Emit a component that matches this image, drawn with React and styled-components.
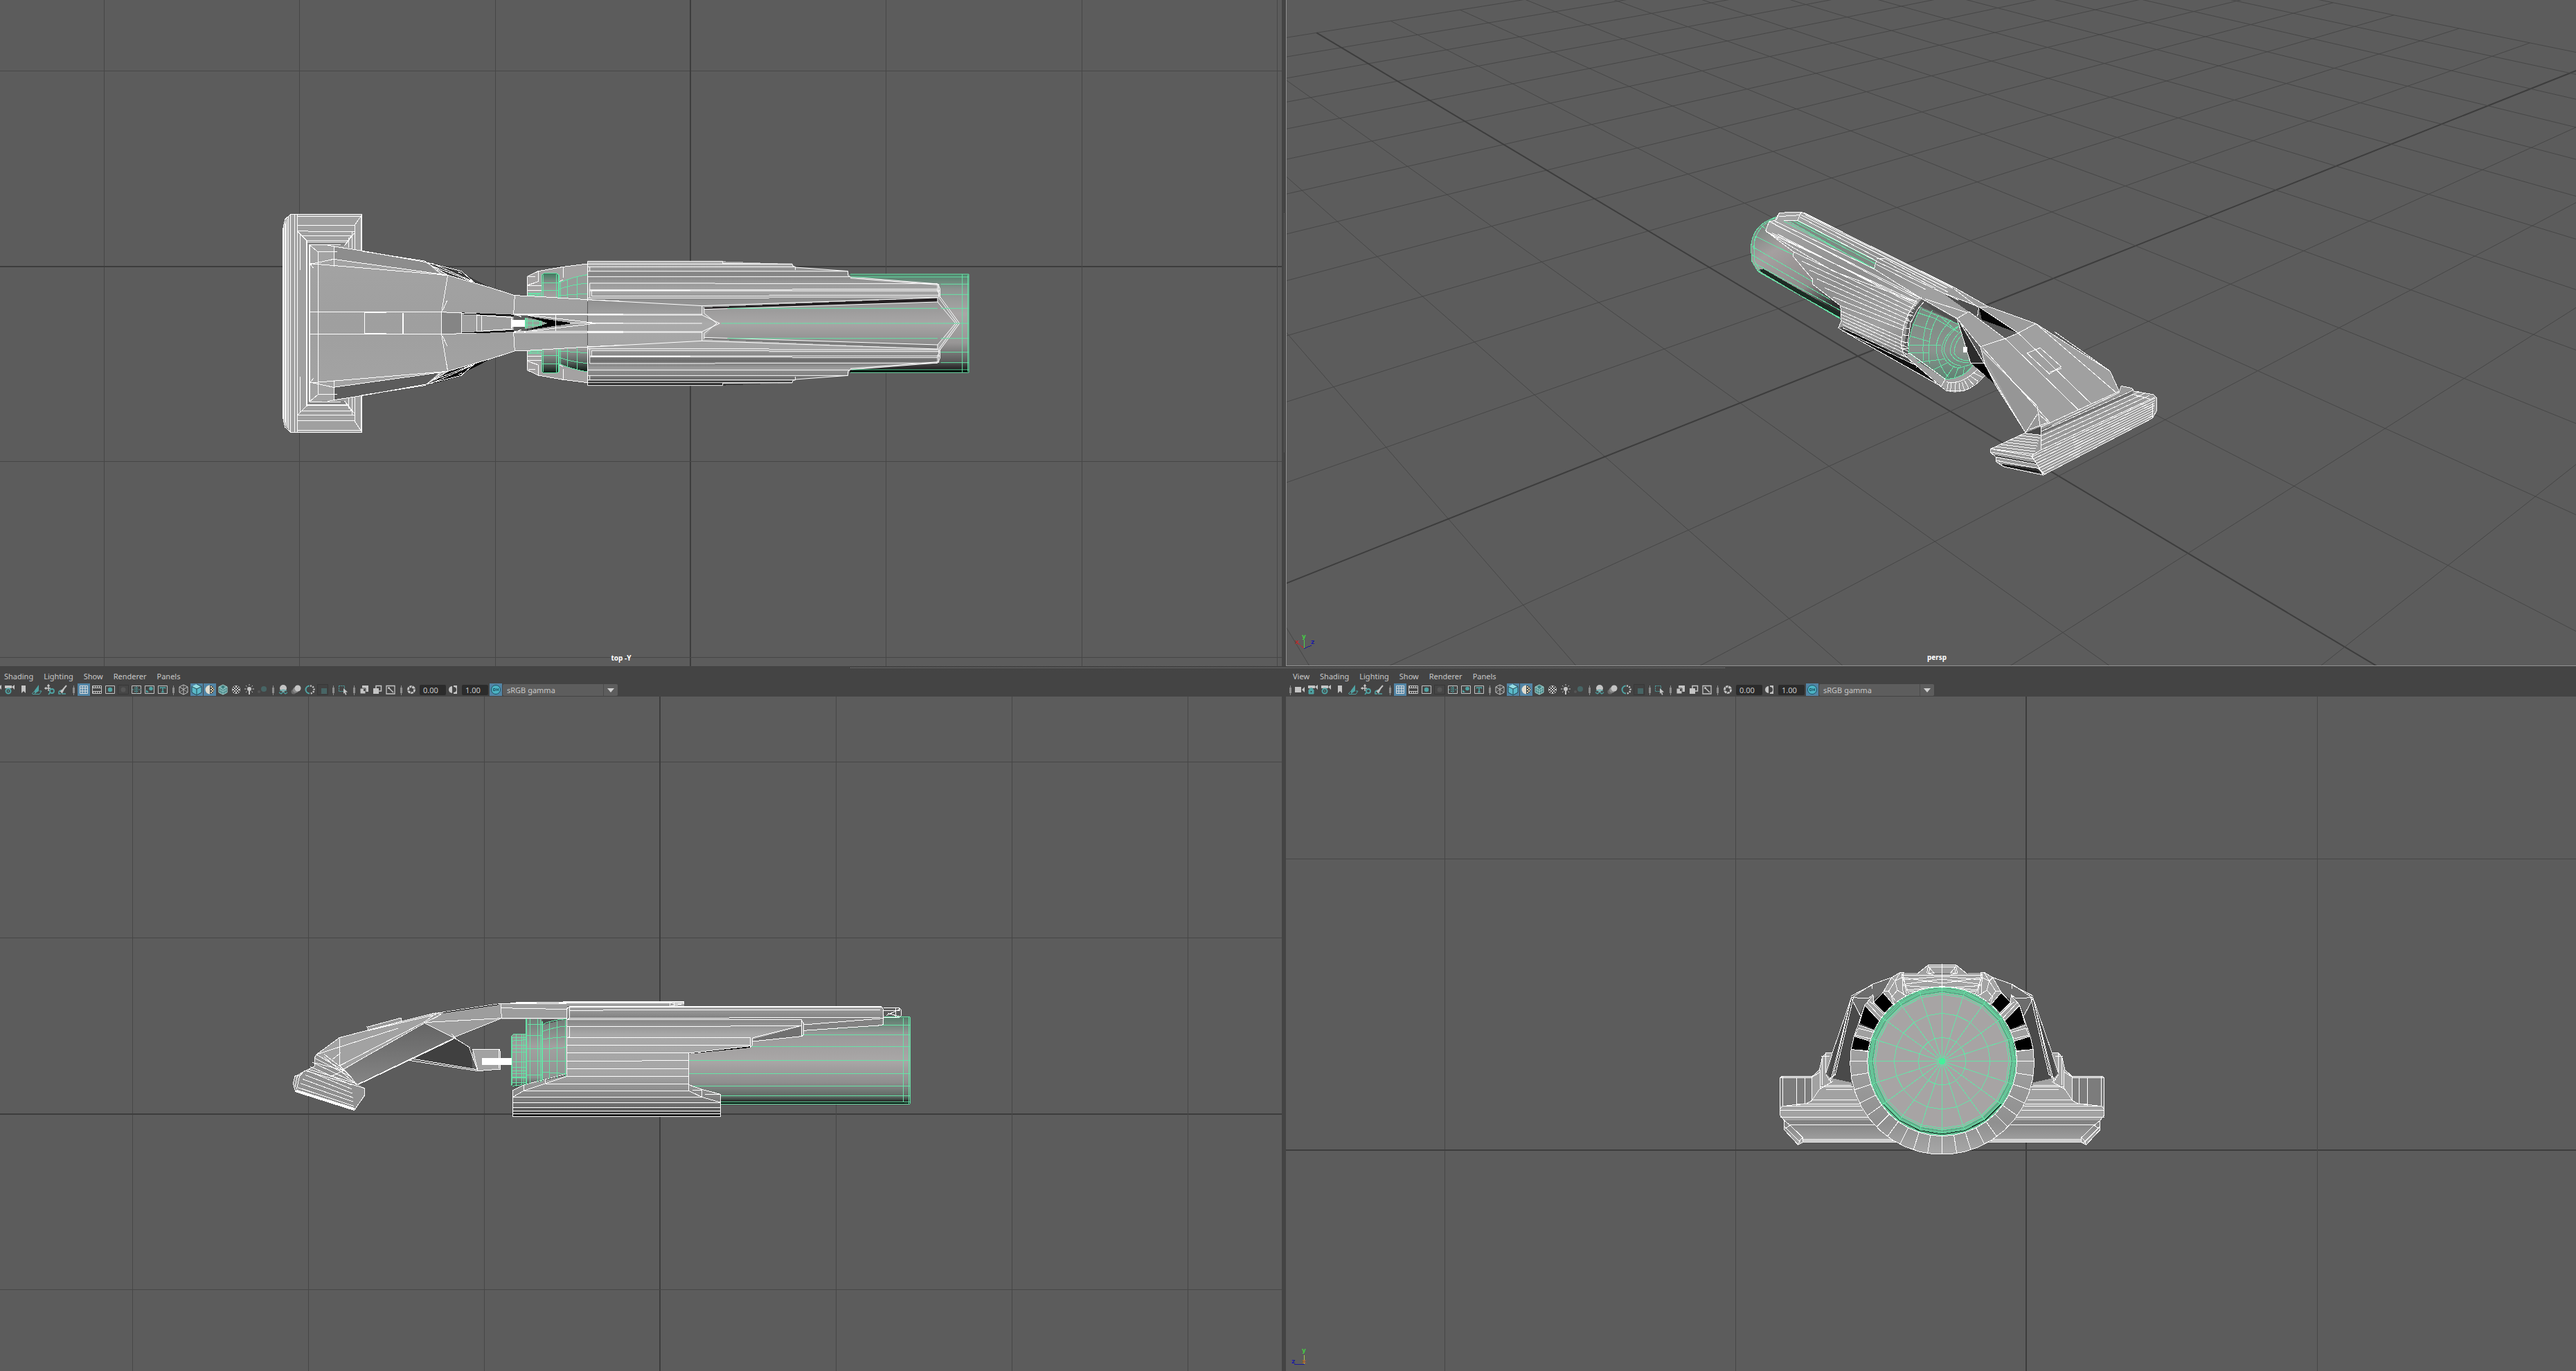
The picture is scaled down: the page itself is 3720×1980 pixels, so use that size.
import React from "react";
import styled, { createGlobalStyle, css } from "styled-components";

const GlobalStyle = createGlobalStyle`
  *, *::before, *::after { box-sizing: border-box; }
  html, body { margin: 0; background: #444; }
  body { font-family: "Noto Sans", "Open Sans", sans-serif; font-size: 11px; color: #c8c8c8; }
  button, input, select { font: inherit; color: inherit; }
`;

/* ---------- layout ---------- */

const Workspace = styled.main`
  display: flex;
  flex-direction: column;
  height: 100vh;
  background: #444;
`;

const PaneRow = styled.div`
  display: flex;
  flex: ${(p) => p.$share} 1 0;
  min-height: 0;
`;

const Pane = styled.section`
  display: flex;
  flex-direction: column;
  flex: ${(p) => p.$share} 1 0;
  min-width: 0;
  overflow: hidden;
`;

const Splitter = styled.div`
  display: flex;
  flex: none;
  align-items: center;
  justify-content: center;
  background: #444;
  ${(p) => (p.$vertical ? css`width: 6px;` : css`height: 4px;`)}
`;

const Grip = styled.span`
  ${(p) =>
    p.$vertical
      ? css`
          width: 1px;
          height: 36%;
          background: repeating-linear-gradient(180deg, #6a6a6a 0 1px, transparent 1px 2px);
        `
      : css`
          width: 34%;
          height: 1px;
          background: repeating-linear-gradient(90deg, #868686 0 1px, transparent 1px 2px);
        `}
`;

const Stage = styled.div`
  position: relative;
  flex: 1;
  min-height: 0;
  background: #5c5c5c;
  ${(p) => p.$active && css`border-left: 1px solid #929292; border-bottom: 1px solid #929292;`}
`;

const Scene = styled.svg`
  position: absolute;
  inset: 0;
  width: 100%;
  height: 100%;
  shape-rendering: crispEdges;

  path, line, polygon, circle { vector-effect: non-scaling-stroke; }
`;

const CameraName = styled.span`
  position: absolute;
  bottom: 4px;
  left: ${(p) => p.$left};
  color: #fff;
  font-size: 10px;
  font-weight: 700;
  line-height: 16px;
`;

const AxisText = styled.text`
  font: 700 9px "DejaVu Sans", sans-serif;
`;

/* ---------- panel header ---------- */

const Header = styled.header`
  flex: none;
  height: 40px;
  background: #444;
`;

const MenuBar = styled.nav`
  display: flex;
  gap: 15px;
  height: 21px;
  padding-left: ${(p) => (p.$cropped ? "6px" : "10px")};
  align-items: center;
`;

const MenuItem = styled.button`
  padding: 0;
  border: 0;
  background: none;
  color: #c8c8c8;
  line-height: 16px;
`;

const Toolbar = styled.div`
  display: flex;
  height: 19px;
  margin-left: ${(p) => (p.$cropped ? "-43px" : "1px")};
  align-items: center;
`;

const Divider = styled.span`
  display: flex;
  width: 11px;
  height: 14px;
  justify-content: center;
  background:
    linear-gradient(#8c8c8c, #8c8c8c) center / 3px 8px no-repeat,
    linear-gradient(#8c8c8c, #8c8c8c) center / 1px 14px no-repeat;
`;

const Tool = styled.button`
  display: flex;
  flex: none;
  width: 19px;
  height: 19px;
  padding: 0;
  border: 0;
  border-right: 1px solid #444;
  border-bottom: 1px solid #444;
  align-items: center;
  justify-content: center;
  background: ${(p) => (p.$on ? "#5285a6" : "transparent")};
  opacity: ${(p) => (p.$dim ? 0.35 : 1)};
`;

const Field = styled.input`
  width: 38px;
  height: 15px;
  margin: 0 2px;
  padding: 0 5px;
  border: 0;
  border-radius: 2px;
  background: #2b2b2b;
  color: #c8c8c8;
`;

const SelectWrap = styled.div`
  position: relative;
  width: 166px;
  height: 17px;
`;

const Select = styled.select`
  width: 100%;
  height: 17px;
  padding: 0 24px 0 6px;
  border: 0;
  border-radius: 2px;
  appearance: none;
  background: linear-gradient(90deg, #5d5d5d 145px, #4b4b4b 145px 146px, #5d5d5d 146px);
  color: #c8c8c8;
  line-height: 16px;
`;

const Caret = styled.svg`
  position: absolute;
  top: 6px;
  right: 5px;
  pointer-events: none;
`;

/* ---------- toolbar icons, drawn on an 18 x 18 field ---------- */

const L = "#c4c4c4";
const T = "#4fa3a3";

const CubeLines = ({ c }) => (
  <path d="M9 2L15 5V13L9 16L3 13V5ZM3 5L9 8.500L15 5M9 8.500V16" fill="none" stroke={c} />
);

const glyphs = {
  camera: <path d="M1 5h9v8H1zM11 9l4-4v8z" fill={L} />,
  cameraLock: (
    <>
      <path d="M1 3h10v4H1zM11 5l4-3v7z" fill={L} />
      <path d="M2 9h7v6H2zM3.500 9V7.500q2-2 4 0V9" fill={T} stroke={T} />
      <circle cx="5.500" cy="12" r="1" fill="#333" />
    </>
  ),
  cameraGear: (
    <>
      <path d="M1 3h10v4H1zM11 5l4-3v7z" fill={L} />
      <circle cx="6" cy="11" r="3.500" fill="#444" stroke={T} strokeWidth="2" />
      <circle cx="6" cy="11" r="1" fill={T} />
    </>
  ),
  bookmark: <path d="M6 3h6v11l-3-3l-3 3z" fill={L} />,
  plane: (
    <>
      <path d="M6 10L12 2V11L6 15z" fill={T} />
      <path d="M2 15L6 11M3 15.500h10L16 11h-3" fill="none" stroke={T} />
    </>
  ),
  pan: (
    <>
      <path d="M7 2v9M2 7h8M5.500 4L7 2l1.500 2M4 5.500L2 7l2 1.500" fill="none" stroke={L} strokeWidth="1.500" />
      <circle cx="12" cy="11" r="3" fill="none" stroke={T} strokeWidth="1.800" />
      <path d="M9.500 13L7 16" stroke={T} strokeWidth="1.800" />
    </>
  ),
  brush: (
    <>
      <path d="M14 3L8 10M9.500 9l-2 4l-2-2z" stroke={L} strokeWidth="2" fill={L} />
      <path d="M6 10q-4 1-3 5h3M7 15h6" fill="none" stroke={T} strokeWidth="1.500" />
    </>
  ),
  grid: <path d="M3.500 3.500h11v11h-11zM7 3v12M11 3v12M3 7h12M3 11h12" fill="none" stroke="#dcdcdc" />,
  film: (
    <>
      <path d="M2.500 3.500h13v11h-13zM2 6.500h14M2 11.500h14" fill="none" stroke={L} />
      <path d="M3 5h12M3 13h12" stroke={L} strokeWidth="2" strokeDasharray="1 2" />
    </>
  ),
  gate: (
    <>
      <path d="M2.500 3.500h13v11h-13z" fill="none" stroke={L} />
      <circle cx="9" cy="9" r="3.200" fill={T} />
    </>
  ),
  gateMask: (
    <>
      <path d="M1.500 2.500h15v13h-15z" fill="#4a4a4a" stroke="#222" />
      <circle cx="9" cy="9" r="3.500" fill="#777" />
    </>
  ),
  chart: (
    <>
      <path d="M2.500 3.500h13v11h-13z" fill="none" stroke={L} />
      <path d="M9 4v11M3 9h13M6 6.500h6M6 11.500h6" stroke={T} strokeDasharray="2 1" />
    </>
  ),
  action: (
    <>
      <path d="M2.500 3.500h13v11h-13z" fill="none" stroke={L} />
      <circle cx="11" cy="7.500" r="2.800" fill={T} />
      <path d="M4 13v-4l4 4z" fill={T} />
    </>
  ),
  title: (
    <>
      <path d="M2.500 3.500h13v11h-13z" fill="none" stroke={L} />
      <path d="M5.500 7.500v-1.500h7v1.500M9 6v6.500M7 12.500h4" fill="none" stroke={T} strokeWidth="1.600" />
    </>
  ),
  wireCube: (
    <>
      <CubeLines c={L} />
      <path d="M9 2v7M3 13l6-4.500l6 4.500" fill="none" stroke={L} strokeWidth="0.700" />
    </>
  ),
  solidCube: (
    <>
      <path d="M9 1L16 4.500V13L9 17L2 13V4.500z" fill="#5ab9c9" />
      <path d="M9 1L16 4.500L9 8L2 4.500z" fill="#93dbe2" />
      <path d="M9 1L16 4.500V13L9 17L2 13V4.500L9 8L16 4.500M9 8V17" fill="none" stroke="#24444e" />
    </>
  ),
  halfSphere: (
    <>
      <circle cx="9" cy="9" r="6.500" fill="#e0dccf" />
      <path d="M9 2.500a6.500 6.500 0 0 1 0 13z" fill="#39464e" />
      <path d="M10 4h2v2h-2zM12 6h2v2h-2zM10 8h2v2h-2zM12 10h2v2h-2zM10 12h2v2h-2zM14 8h1v2h-1z" fill="#e0c9a0" />
    </>
  ),
  shadedCube: (
    <>
      <path d="M9 2L15 5V13L9 16L3 13V5z" fill="#3d7f80" />
      <CubeLines c="#a7d5d2" />
      <path d="M6 4v10M12 4v10M4 9l5 3l5-3" fill="none" stroke="#a7d5d2" strokeWidth="0.800" />
    </>
  ),
  checker: (
    <>
      <circle cx="9" cy="9" r="6" fill={L} />
      <path d="M6 4h2v2H6zM10 4h2v2h-2zM4 6h2v2H4zM8 6h2v2H8zM12 6h2v2h-2zM6 8h2v2H6zM10 8h2v2h-2zM4 10h2v2H4zM8 10h2v2H8zM12 10h2v2h-2zM6 12h2v2H6zM10 12h2v2h-2z" fill="#3b3b3b" />
    </>
  ),
  bulb: (
    <>
      <circle cx="9" cy="8" r="3" fill={L} />
      <path d="M8 10h2v6H8z" fill={L} />
      <path d="M9 1v2M2 8h2.500M13.500 8H16M4 3l1.500 1.500M14 3l-1.500 1.500M4 13l1.500-1.500M14 13l-1.500-1.500" stroke={L} />
    </>
  ),
  spheres: (
    <>
      <circle cx="11" cy="8" r="4" fill={T} />
      <circle cx="4" cy="12" r="2" fill="#777" />
    </>
  ),
  jelly: (
    <>
      <circle cx="9" cy="7" r="5" fill={L} />
      <path d="M4 11q5-3 10 0M3 13l3 2l3-3l3 3l3-2" fill="none" stroke={T} strokeWidth="1.300" />
    </>
  ),
  blur: (
    <>
      <circle cx="5" cy="12" r="3.500" fill="#6a6a6a" />
      <circle cx="8" cy="9.500" r="4" fill="#8a8a8a" />
      <circle cx="11" cy="7" r="4.500" fill={L} />
    </>
  ),
  antialias: (
    <>
      <path d="M9 3.500a5.500 5.500 0 0 0 0 11" fill="none" stroke={T} strokeWidth="2" />
      <path d="M10 3.500a5.500 5.500 0 0 1 0 11" fill="none" stroke={L} strokeWidth="2.500" strokeDasharray="2 1.500" />
    </>
  ),
  depth: (
    <>
      <path d="M1.500 1.500h15v15h-15z" fill="#3e3e3e" stroke="#222" />
      <path d="M7 7h8v8H7z" fill={T} />
    </>
  ),
  isolate: (
    <>
      <path d="M2.500 3.500h8v8h-8z" fill="none" stroke={T} strokeDasharray="2 1" />
      <path d="M9 7l6 5.500l-3 .200l1.500 3.300l-1.500 .700l-1.500-3.500L9 15z" fill={L} />
    </>
  ),
  xray: (
    <>
      <path d="M6 3h9v9H6z" fill={L} />
      <path d="M3 7h8v8H3z" fill={L} stroke="#444" />
      <path d="M8 8h2.500v3H8z" fill="#444" />
    </>
  ),
  xrayActive: (
    <>
      <path d="M7 3.500h7.500V11H7z" fill="none" stroke={L} strokeWidth="1.500" />
      <path d="M3 7h8v8H3z" fill={L} />
    </>
  ),
  joints: (
    <>
      <path d="M3 3.500h12v11.500H3z" fill="none" stroke={L} strokeWidth="1.300" />
      <path d="M6 6l7 7" stroke={L} strokeWidth="1.500" />
      <circle cx="6.500" cy="6.500" r="1.500" fill={L} />
    </>
  ),
  aperture: (
    <>
      <circle cx="9" cy="9" r="6" fill={L} />
      <path d="M9 6.500l2.500 1.500v3L9 12l-2.500-1.500v-3zM9 6.500L11 2M11.500 8H16M11 11l2.500 4M8.500 12L6.500 16M6.500 10H2M7 7L4.500 3" fill="#444" stroke="#444" />
    </>
  ),
  gamma: (
    <>
      <path d="M7 4a5 5 0 0 0 0 10z" fill={L} />
      <path d="M9 3h5v12H9v-2a4 4 0 0 0 0-8z" fill={L} />
    </>
  ),
  on: (
    <>
      <circle cx="9" cy="9" r="6.500" fill="#4cb3c4" stroke="#1d5260" />
      <path d="M5.500 7.500h2.500v3H5.500zM10 11V7.500l2.500 3V7" fill="none" stroke="#1d5260" />
    </>
  ),
};

const strips = [
  ["camera", "cameraLock", "cameraGear", "bookmark", "plane", "pan", "brush"],
  ["grid", "film", "gate", "gateMask", "chart", "action", "title"],
  ["wireCube", "solidCube", "halfSphere", "shadedCube", "checker", "bulb", "spheres"],
  ["jelly", "blur", "antialias", "depth"],
  ["isolate"],
  ["xray", "xrayActive", "joints"],
];
const active = new Set(["grid", "solidCube", "halfSphere", "on"]);
const dimmed = new Set(["gateMask", "spheres", "depth"]);

const menus = ["View", "Shading", "Lighting", "Show", "Renderer", "Panels"];

const IconTool = ({ name }) => (
  <Tool type="button" aria-label={name} $on={active.has(name)} $dim={dimmed.has(name)}>
    <svg width="18" height="18" viewBox="0 0 18 18" aria-hidden="true">{glyphs[name]}</svg>
  </Tool>
);

function PanelHeader({ cropped }) {
  return (
    <Header>
      <MenuBar $cropped={cropped}>
        {menus.slice(cropped ? 1 : 0).map((m) => (
          <MenuItem type="button" key={m}>{m}</MenuItem>
        ))}
      </MenuBar>
      <Toolbar $cropped={cropped}>
        {strips.map((strip, i) => (
          <React.Fragment key={i}>
            <Divider />
            {strip.map((n) => <IconTool key={n} name={n} />)}
          </React.Fragment>
        ))}
        <Divider />
        <IconTool name="aperture" />
        <Field aria-label="Exposure" defaultValue="0.00" />
        <IconTool name="gamma" />
        <Field aria-label="Gamma" defaultValue="1.00" />
        <IconTool name="on" />
        <SelectWrap>
          <Select aria-label="View transform" defaultValue="srgb">
            <option value="srgb">sRGB gamma</option>
          </Select>
          <Caret width="10" height="6" viewBox="0 0 10 6"><path d="M0 0h10L5 6z" fill="#d0d0d0" /></Caret>
        </SelectWrap>
      </Toolbar>
    </Header>
  );
}

/* ---------- drawing helpers ---------- */

const W = "#ffffff";
const G = "#66e3a7";
const GRID = "#474747";
const AXIS = "#3d3d3d";

const Wire = ({ d, c = W, w = 1 }) => <path d={d} fill="none" stroke={c} strokeWidth={w} />;
const Face = ({ d, f = "#a1a1a1" }) => <path d={d} fill={f} />;

/* n lines spread between edge a-b and edge c-d */
const ruled = (a, b, c, d, n) => {
  let s = "";
  for (let i = 0; i < n; i++) {
    const t = n === 1 ? 0.5 : i / (n - 1);
    s += `M${a[0] + (b[0] - a[0]) * t},${a[1] + (b[1] - a[1]) * t}L${c[0] + (d[0] - c[0]) * t},${c[1] + (d[1] - c[1]) * t}`;
  }
  return s;
};

/* horizontal strokes: [y, x1, x2] */
const rows = (list) => list.map(([y, a, b, y2 = y]) => `M${a},${y}L${b},${y2}`).join("");

const Ramp = ({ id, stops, x2 = 0, y2 = 1 }) => (
  <linearGradient id={id} x1="0" y1="0" x2={x2} y2={y2}>
    {stops.map(([o, c]) => <stop key={o} offset={o} stopColor={c} />)}
  </linearGradient>
);

function OrthoGrid({ x0, y0, step, left, right, top, bottom }) {
  const out = [];
  for (let k = -12; k <= 12; k++) {
    const x = Math.round(x0 + k * step);
    const y = Math.round(y0 + k * step);
    const c = k === 0 ? AXIS : GRID;
    const w = k === 0 ? 2 : 1;
    const o = k === 0 ? 0 : 0.5;
    if (x > left && x < right) out.push(<line key={"v" + k} x1={x + o} x2={x + o} y1={top} y2={bottom} stroke={c} strokeWidth={w} />);
    if (y > top && y < bottom) out.push(<line key={"h" + k} x1={left} x2={right} y1={y - o} y2={y - o} stroke={c} strokeWidth={w} />);
  }
  return <g>{out}</g>;
}

/* ground plane projected with two vanishing points on a level horizon */
function project(u, v) {
  const g = -0.0745 * u;
  const h = 0.064 * v;
  const q = 1 + g + h;
  return [(2683 + g * 1027 + h * 5172) / q, (514.3 - 475 * (g + h)) / q, q];
}

function PerspectiveGrid() {
  const out = [];
  const trace = (key, at, k) => {
    const pts = [];
    for (let t = -240; t <= 240; t++) {
      const [x, y, q] = at(t / 20);
      if (q > 0.06) pts.push([x, y]);
    }
    if (pts.length < 2) return;
    const a = pts[0];
    const b = pts[pts.length - 1];
    out.push(
      <line key={key} x1={a[0]} y1={a[1]} x2={b[0]} y2={b[1]} stroke={k === 0 ? AXIS : GRID} strokeWidth={k === 0 ? 2 : 1} />
    );
  };
  for (let k = -12; k <= 12; k++) {
    trace("u" + k, (t) => project(k, t), k);
    trace("v" + k, (t) => project(t, k), k);
  }
  return <g shapeRendering="auto">{out}</g>;
}

/* ---------- top view ---------- */

const topHullRows = rows([
  [82, 288, 725], [94, 288, 950], [106, 288, 960], [125, 288, 1130], [149, 288, 1138],
  [177, 295, 700], [179, 700, 1420], [206, 295, 950], [203, 950, 1420], [210, 295, 1428],
  [233, 300, 875], [229, 875, 1425], [241, 288, 875], [237, 875, 1425], [208, 300, 620],
]);

const TopHull = ({ lower }) => (
  <g transform={lower ? "matrix(1 0 0 -1 0 702)" : undefined}>
    {lower && <Face d="M288,98H950L940,92H725V82H288Z" f="#242424" />}
    <Wire d={topHullRows} />
    <Wire d="M288,82V250M295,106V125M295,177V241M301,208V233M725,82V92L950,94L952,104L960,106V120M960,108L1130,125V143L1138,150L1420,180L1428,200V240M1138,155L1420,184M1424,180V236" />
    <Wire d="M1420,182V212L1424,220V236" />
    <Face d="M665,282L1420,240V258L665,290Z" f={lower ? "#7d7d7d" : "#242022"} />
    <Wire d="M658,275L1420,240M665,290L1420,258M48,232L285,248L658,275V315L715,351M665,283V308L706,351M185,312H658M185,315H658M1420,240V258L1478,351M1424,240L1484,351M1428,236L1491,351" />
    <Wire d="M740,286H1420" c={G} />
    <Wire d="M1430,181H1521M1430,226H1521M1430,286H1521M1142,150H1521M1138,138H1521V351M1518,142V351M1500,138V351" c={G} />
  </g>
);

const TopHandle = ({ lower }) => {
  const black = lower ? "#000" : "#3c3c3c";
  return (
    <g transform={lower ? "matrix(1 0 0 -1 0 1121)" : undefined}>
      <Face d="M1145,445V357L1192,335L1300,316L1405,303V458Z" f="#a4a2a2" />
      <Face d="M1285,450V385Q1340,360 1405,352V458Z" f={lower ? "url(#ringDark)" : "#979c99"} />
      <Wire d="M1145,443V357L1192,335L1300,316L1405,303M1145,398H1205M1145,418H1205M1192,335V380L1145,396M1150,360H1180M1300,316V362M1300,372L1283,380M1405,300V465" />
      <Face d="M1207,450V352L1215,345H1275L1283,352V450Z" f={lower ? "url(#ringDark)" : "url(#ringLight)"} />
      <Wire d="M1145,430H1205M1150,434H1200M1145,440H1205M1160,430V443M1190,430V443M1207,450V352L1215,345H1272L1283,352V450M1213,450V350M1270,348V450M1280,450V350M1207,385H1283M1207,420H1283M1283,385Q1340,360 1405,350M1283,412Q1340,392 1405,387M1283,440L1405,432M1290,380V450M1320,370V452M1360,360V455" c={G} />
      <Face d="M85,561V155L95,115L120,88H428V245H307L200,300V561Z" f="#a0a0a0" />
      <Face d="M190,205H370L350,225H200V561H190Z" f="#858585" />
      <Face d="M200,561V220L310,225L705,296L800,352L1090,440L1405,458V561Z" f="url(#skin)" />
      <Face d="M307,228L705,296L760,345L307,285Z" f={lower ? "#5c5c5c" : "#8d8d8d"} />
      <Face d="M730,298L860,333L880,352L990,408L920,388L800,352Z" f={black} />
      <Wire d="M85,561V155L95,110L120,88M90,561V140M94,561V130M98,561V120M104,561V108M110,561V100M120,561V88M136,561V88M148,561V88M120,88H428V245M148,97H423M148,137H397M148,162H195L200,163H395M165,181H385M190,203H370M190,208H365M200,220H335M428,90L397,135V240M425,95V244M148,162L190,203M395,170L360,215M385,165V240M372,190V235M383,181L352,225M160,175V330M188,203V561M192,203V561M200,220V561M203,220V561M238,252V561" />
      <Wire d="M200,220L238,252H320M307,225V315M203,305L305,283L800,352M205,305L218,322M203,302L325,312L775,350M280,222L307,228L425,246L705,296L860,335L870,345L920,388M705,296L800,352M715,300L775,350M730,300L910,380M740,315L905,380M845,338L862,345M775,352H800L990,408L1090,440M800,352L773,512M797,462L778,505M425,248L705,292" />
      <Face d="M773,514L860,518V561H773Z" f="#858585" />
      <Face d="M1085,528H1145L1245,561H1085Z" f="#5c5c5c" />
      <Face d="M1135,536L1270,561H1135Z" f="#93a89c" />
      <Face d="M1140,530L1345,561H1235Z" f="#000" />
      <Wire d="M860,517L1085,527" c="#000" w={2} />
      <Wire d="M203,512H773L860,516M440,512V561M440,515H535M605,515V561M608,515V561M773,512V561M860,517V561M860,516L925,518M925,525V561M947,527V561M925,525L1080,536V561M1090,440L1085,520L1120,533M1090,440L1160,443L1405,458L1560,466M1085,520H1560M1090,524H1560M1130,523L1450,561M1268,523V561" />
      <Wire d="M1135,538V561M1139,538V561M1146,540V561M1170,545V561M1200,549V561M1204,549V561M1135,552H1200" c={G} />
    </g>
  );
};

const TopModel = () => (
  <g>
    <g transform="translate(720 350) scale(0.44643 0.33333)">
      <rect x="1100" y="138" width="421" height="425" fill="url(#tube)" />
      <rect x="1100" y="550" width="421" height="13" fill="#000" />
      <Face d="M288,351V82H725L950,94L958,108L1130,125L1138,150L1420,180L1428,236L1491,351L1428,466L1420,522L1138,552L1130,577L958,594L950,608L725,620H288Z" f="url(#hull)" />
      <Face d="M665,290L1420,258L1478,351L1420,444L665,412L705,351Z" f="url(#panel)" />
      <TopHull />
      <TopHull lower />
      <Wire d="M720,351H1521" c={G} />
      <Wire d="M300,351H658" />
    </g>
    <g transform="translate(380 280) scale(0.33333)">
      <TopHandle />
      <TopHandle lower />
      <rect x="1075" y="545" width="60" height="32" fill="#fff" />
      <Wire d="M1330,560.500H1560M1075,540V582" />
    </g>
  </g>
);

/* ---------- perspective view ---------- */

const PerspModel = () => (
  <g transform="translate(2500 280) scale(0.42091 0.33333)">
    <Face d="M160,98Q72,130 68,230L70,290L90,332L375,542L400,450L300,200Z" f="url(#persTube)" />
    <Face d="M92,330L370,538L372,515L110,325Z" f="#1c2c24" />
    <Wire c={G} d="M160,98Q72,130 68,230L70,290L90,332L375,542M150,105Q84,140 78,225L80,290L100,335M80,300L375,505M68,262L340,458M72,228L300,395M82,183L215,265M105,140L125,155M82,183Q76,230 80,262M92,337L372,536" />
    <Face d="M118,160L130,120L150,115L165,82L240,78L765,405L880,487L815,515L775,545L655,455L610,520L590,690L715,830L385,595L368,580L378,550L375,485L278,390V368L212,270L215,252Z" f="url(#persHull)" />
    <Face d="M190,115H228L498,290L490,325Z" f="#7f8a84" />
    <Face d="M370,580L385,575L600,705L720,835L388,598Z" f="#4a4a4a" />
    <Face d="M400,590L650,752L700,815L385,598Z" f="#111" />
    <Wire c={G} d="M180,118L495,325M215,118L498,305M228,118L498,292M200,120L480,320" />
    <Wire d="M118,160L130,120L150,115L165,82L240,78L765,405M130,120L655,455M118,160L215,252L212,270L278,368V390L375,485L378,550L368,580L385,595L715,830M165,82L155,115M165,98L235,92L243,78M180,115H228L240,78M228,115L498,290L490,325L655,455M150,118L490,325M140,125L640,455M122,165L350,335L640,470M250,82L760,405M255,92L765,412M240,92L740,408M235,100L700,408M498,282L530,282L780,450M498,292L695,410M498,305L815,510" />
    <Wire d={ruled([215, 252], [375, 485], [630, 500], [592, 590], 7)} />
    <Wire d={ruled([122, 165], [160, 175], [640, 470], [634, 485], 3)} />
    <Wire d={ruled([377, 508], [385, 595], [588, 625], [650, 752], 7)} />
    <Wire d="M640,455L655,448L665,462L640,500L615,560L607,640L610,690L650,735M635,460L608,520L592,570L583,650L590,690L600,705L720,835M608,520L625,530M600,545L618,555M592,580L610,585M587,610L607,615M584,640L606,645M583,670L607,672M590,700L612,690M635,752L652,735M688,805L705,775" />
    <Face d="M612,690L652,735L735,803Q790,800 830,740L872,785Q790,885 740,852L600,705Z" f="#a0a0a0" />
    <Face d="M652,490Q605,600 610,690L735,803Q800,800 830,740L790,565Z" f="url(#engine)" />
    <Wire c={G} d="M652,490Q605,600 610,690L735,803Q800,800 830,740M690,505Q650,590 660,722M712,525Q670,600 680,735M755,545Q695,620 705,690Q715,750 745,795M785,568Q725,610 722,680Q735,745 780,755L825,738M780,575Q732,620 730,680Q745,740 790,745M795,590Q750,630 752,690Q770,735 815,730M800,600Q765,640 765,690Q780,725 818,722M640,515L700,540M622,565L690,590M612,615L680,640M610,655L720,656M612,690L680,690M640,730L735,715M690,765L745,730M735,800L765,745M765,800L780,750M795,790L800,748M700,540L780,600M720,535L770,590M655,500L780,565" />
    <Wire d="M720,835L740,855L795,855Q840,835 872,785M735,803L720,835M745,815L740,852M755,820L752,857M770,820L768,858M782,820L785,857M792,815L800,852M800,808L815,842M812,800L835,832M822,790L850,815M832,775L865,797M845,762L872,785M740,815Q790,830 845,760M612,690L735,803M600,705L715,830" />
    <Face d="M660,465L775,545V562L690,500Z" f="#505050" />
    <Face d="M730,432L850,490V530L815,515Z" f="#505050" />
    <Face d="M850,490L985,603L860,545Z" f="#050505" />
    <Face d="M860,545L985,603L940,628L840,530Z" f="#5c5c5c" />
    <Face d="M775,545L868,735H822Z" f="#2c2c2c" />
    <Face d="M825,735H868L905,825L858,772Z" f="#000" />
    <Face d="M655,455L775,540L855,660L940,628L815,510L700,408L640,420Z" f="#a0a0a0" />
    <Face d="M855,662L940,627L985,603L1045,562L1300,768L1332,857L1100,1000L1060,1010L1010,1035L905,825L868,735Z" f="#a0a0a0" />
    <Face d="M862,690L1010,1035L1060,1008L1050,920Z" f="#969696" />
    <Face d="M765,405L880,487L1045,562L985,603L850,490L735,432Z" f="#9c9c9c" />
    <Wire d="M655,455L775,540L855,662L940,627L985,603L1045,562L1300,768L1332,857M815,510L775,540L822,735H868M815,510L940,627M665,455L810,515M765,405L880,487L1045,562M735,432L850,490H880M850,490L845,530M850,490L985,603M855,662L870,735L905,825L1010,1035M862,680L1050,920L1060,1008M862,665L1100,1000M868,735L1010,1035M940,627L1195,940M985,603L1240,915M1045,562L1320,860M1110,598L1300,768M1015,690L1060,667L1132,748L1092,780L1015,690M1132,757L1092,772M780,545L868,735M695,410L780,460M765,412L845,490M1050,955L1010,1035M1055,955L1088,990L1025,1020" />
    <rect x="797" y="662" width="12" height="25" fill="#fff" />
    <Face d="M890,1105L1010,1035L1062,1010L1332,855L1338,832L1375,842L1382,855L1450,870L1460,885V940L1445,972L1075,1215L935,1182L908,1160V1140L890,1120Z" f="#9a9a9a" />
    <Face d="M1065,1020L1375,850L1380,865L1065,1040Z" f="#707070" />
    <Face d="M1010,1035L1062,1010V1045Z" f="#474747" />
    <Face d="M930,1170L1050,1190L1070,1215L940,1182Z" f="#333" />
    <Wire d={ruled([1062, 1030], [1062, 1110], [1380, 850], [1455, 880], 5)} />
    <Wire d={ruled([1030, 1140], [1075, 1215], [1455, 885], [1445, 972], 9)} />
    <Wire d={ruled([1005, 1037], [892, 1105], [1062, 1045], [1040, 1128], 8)} />
    <Wire d="M890,1105L1010,1035M890,1105V1120L908,1140L1050,1172L1030,1135L890,1105M908,1140V1160L935,1182L1070,1218L1050,1172M908,1155L1055,1190L1075,1215L1445,972L1460,940V885L1450,870L1382,855L1375,842L1338,832L1332,855L1062,1010V1110L1030,1135M895,1120L1040,1150M1100,1003L1332,860M1382,870L1435,888M1445,970V905" />
    <Wire d="M905,1135L1045,1168M930,1175L1055,1205" c="#000" />
  </g>
);

/* ---------- side view ---------- */

const sideRows = rows([
  [101, 300, 1405], [103, 300, 1405], [118, 300, 420], [115, 420, 1400], [153, 300, 865], [149, 865, 1400],
  [157, 291, 1120], [187, 291, 870], [184, 870, 1120], [236, 291, 940], [268, 291, 940, 270], [302, 291, 722],
  [338, 291, 555], [335, 555, 722], [371, 291, 722], [403, 291, 722], [436, 215, 722], [466, 138, 722],
  [493, 99, 768], [518, 99, 834], [538, 99, 834], [555, 99, 575], [553, 575, 834], [567, 99, 834], [577, 99, 834],
]);

const SideModel = () => (
  <g>
    <g transform="translate(700 1420) scale(0.40816 0.33333)">
      <rect x="722" y="145" width="783" height="379" fill="url(#sideTube)" />
      <Wire c={G} d={rows([[145, 1390, 1505], [182, 1290, 1505], [223, 1050, 1505], [275, 940, 1505], [335, 722, 1505], [392, 722, 1505], [446, 722, 1505], [488, 800, 1505], [516, 834, 1505], [524, 834, 1505]])} />
      <Wire c={G} d="M1482,150V520M1500,145V524M1505,147V522" />
      <rect x="834" y="517" width="650" height="5" fill="#000" />
      <Face d="M60,90L310,80H705V100H291V155H60Z" f="#a0a0a0" />
      <Face d="M291,103H1405L1415,150L1405,182L1128,205L1120,228L948,250L940,277L722,303V440L768,460L834,481V577H99V465L138,440L291,400Z" f="url(#sideHull)" />
      <Face d="M948,243L1120,187V228L948,252Z" f="#707070" />
      <Face d="M1128,180L1405,152V182L1128,205Z" f="#828282" />
      <Face d="M725,303L940,272V279L725,305Z" f="#000" />
      <Face d="M99,569H834V575H99Z" f="#0a0a0a" />
      <Wire d={sideRows} />
      <Wire d="M291,403V110L300,101M300,103V150L291,160M300,187V232L293,238M1405,101L1410,115V178L1400,183M1120,157V230L1128,225V175L1120,157M1128,180L1410,152M1128,205L1405,182M940,236V277L948,268V238M948,236L1120,184M948,252L1120,230M722,303L940,272M722,303V466L768,493L834,516M722,440L768,460L834,481V577H99V465L138,440L291,392M138,440V466L291,403M99,493L138,466M215,418V436M768,460V493M735,463H768M780,481H834" />
      <Wire d="M0,100L60,90H120L310,86H650L705,90M60,88L310,80H705V88L655,100V84M670,84V98M60,90V152H291M60,107L291,110M110,84H475M0,153H291" />
      <Wire w={2} d="M310,81H705M300,101H1405" />
      <Wire d="M1410,107H1465L1474,115V140L1465,149H1410M1410,120H1470M1425,130L1470,145M1420,140L1470,112M1455,107V149" />
    </g>
    <g transform="translate(400 1420) scale(0.33333)">
      <Face d="M1015,230L1022,220H1078V155H1255V392L1065,440L1035,452L1015,445Z" f="url(#sideEngine)" />
      <Face d="M1150,155H1255L1150,180Z" f="#4c4c4c" />
      <Wire c={G} d="M1015,445V230L1025,220H1078M1020,232V440M1037,222V447M1060,222V440M1070,220V440M1078,153V440M1082,153V438M1098,153V435M1130,153V430M1143,155V428M1147,180V425M1152,180V420M1180,165V415M1215,160V410M1250,158V405M1147,180Q1190,158 1255,155M1147,210Q1200,190 1255,185M1147,243Q1200,235 1255,232M1147,285L1255,278M1078,337H1255M1147,385L1255,392M1085,180H1145M1080,226H1147M1078,285H1147M1078,397H1147M1015,235H1078M1015,250L1078,245M1015,268H1078M1015,285H1078M1015,300H1078M1015,340H1078M1015,365H1078M1015,380H1078M1015,392H1078M1015,406H1078M1015,410H1078M1015,430H1078M1020,445L1060,440" />
      <Wire c={G} w={2} d="M1148,165V420M1018,230V440" />
      <Face d="M970,88L1255,92V152H970L765,235L635,170L690,130Z" f="#9d9d9d" />
      <Face d="M850,286H963L970,300V370L870,380L845,310Z" f="#a2a2a2" />
      <Face d="M768,237L838,280L848,372L590,330Z" f="#404040" />
      <Face d="M270,236L540,165L690,130L635,170L275,385L170,310Z" f="#a2a2a2" />
      <Face d="M635,170L768,237L345,437L285,378Z" f="url(#underArm)" />
      <Face d="M390,190L535,150L542,165L395,202Z" f="#999" />
      <Face d="M165,312L285,360L340,430L380,455V490L335,550L80,470L72,440L75,405L165,360Z" f="#909090" />
      <Wire d="M635,170L690,130L970,88H1255M690,130L710,135L640,170L700,142M970,88L973,152L635,170M973,152H1255M973,107L1255,113M765,235L970,153M635,170L768,237L838,280M755,218L775,240M768,237L345,440M765,242L350,440M565,333L870,380L833,280M590,328L868,374M848,286H963L968,300V372L870,380L848,286M963,286V370M270,236L540,165L690,128M270,236L172,308L165,320V358L75,405M270,236L272,357L635,170M172,308L525,195M205,308L275,362M275,302L240,330M278,378L640,172M395,205L690,135M390,190L537,150L540,165L397,205L388,185M272,357L320,405L345,440" />
      <Wire d={ruled([165, 325], [80, 470], [320, 405], [335, 550], 9)} />
      <Wire d="M165,345L290,378M120,378L380,455V485L335,550L80,470L70,435L78,402H98L120,378M88,402L78,450M98,402L85,460M135,372L345,435M172,310L290,378L232,405M205,320L345,440" />
      <Wire w={4} d="M82,466L335,546" />
      <Wire d="M720,128L960,92" c="#000" />
      <rect x="888" y="324" width="130" height="29" fill="#fff" />
    </g>
  </g>
);

/* ---------- front view ---------- */

const polar = (r, deg) => {
  const a = (deg * Math.PI) / 180;
  return `${(794 + r * Math.cos(a)).toFixed(1)},${(488 + r * Math.sin(a)).toFixed(1)}`;
};
const ngon = (r, n = 20) => "M" + Array.from({ length: n }, (_, i) => polar(r, (i * 360) / n)).join("L") + "Z";
const band = (a, b, r1, r2) => `M${polar(r1, a)}L${polar(r2, a)}L${polar(r2, b)}L${polar(r1, b)}Z`;

const FrontHalf = ({ flip }) => (
  <g transform={flip ? "matrix(-1 0 0 1 1588 0)" : undefined}>
    <Face d="M400,215L490,155L620,105L600,200L400,440V580L300,558L318,455Z" f="#4a4a4a" />
    <Face d="M400,215L490,155L575,125L540,190L455,245L435,290Z" f="#6d6d6d" />
    <Face d="M92,560L100,553H232L262,525L275,470L290,453H318L290,540L310,560L400,580L440,680L590,840H190L170,850L110,785V745L92,722Z" f="#a2a2a2" />
    <Face d="M92,560H230V660L160,680H92Z" f="#7c7c7c" />
    <Face d="M110,745H490L590,838H190L110,785Z" f="url(#wing)" />
    <Wire d="M92,722V560L100,553H232L262,525L275,470L290,453H318L400,215L490,155L575,125L612,104M92,560H225L265,535M104,556V682M164,560V680M199,560V675M230,558V658L262,610L320,575M92,700H450M92,695L104,682H440M120,680L205,673L235,655H425M165,673H435M92,722L110,745V785L170,850L192,838H600M110,745L135,765H500M92,730H480M115,780L135,765L192,820M192,832H590M192,828H580M170,850L178,830L192,818V838M180,840L110,770M265,600H410M290,612H405M285,592H400M265,525V605M275,470V590M290,453V540M270,468H305M290,545L310,575L400,215M400,215L320,560M410,210L330,550M400,215L440,290M400,212L475,215L495,200M400,205L490,158V175M318,455L290,540M330,545L300,570" />
    <Face d={band(200.5, 187.5, 322, 396)} f="#000" />
    <Face d="M435,322L458,248L520,315L502,352Z" f="#000" />
    <Face d="M500,232L540,190L580,240L545,275Z" f="#000" />
    <Face d="M435,330L500,355L485,400L413,380Z" f="#a0a0a0" />
    <Face d="M458,245L495,205L498,235L545,280L522,310Z" f="#a0a0a0" />
    <Face d="M540,190L575,125L612,103L794,112V175L650,195L580,240Z" f="#a3a3a3" />
    <Wire d="M412,380L430,330L500,355M430,345L418,375L482,390M413,380L485,402M430,345L495,362M400,435L412,380M398,437L475,443M435,325L458,245L495,203L498,235L545,280M458,245L522,312M470,235L530,300M480,230L495,240L540,285M498,232L538,190L580,240M430,330L458,248M538,190L575,125L612,103H628L620,120L650,195M540,185L562,185L590,225M575,125L590,140L562,185M590,140L620,125M612,103L590,140L600,180L640,205M600,180L575,210L585,240M620,115H794M620,125L794,150M625,135L794,120M625,155L794,132M625,160L794,172M640,180L794,165M625,110L640,195M620,108L625,200M685,110L735,70H794M735,70L728,105L760,115M740,85L735,110M735,78L760,108M735,80H794M728,108H760M650,185H690L794,172" />
  </g>
);

const FrontModel = () => (
  <g transform="translate(2540 1370) scale(0.33333)">
    <Face d="M690,108L735,70H850L900,108Z" f="#a0a0a0" />
    <FrontHalf />
    <FrontHalf flip />
    <path d={`M${polar(397, -7.5)}` + Array.from({ length: 22 }, (_, i) => "L" + polar(398 + 6 * Math.sin((i * Math.PI) / 21), -7.5 + (i * 195) / 21)).join("") + `L${polar(320, 187.5)}L794,488L${polar(320, -7.5)}Z`} fill="url(#ring)" stroke={W} />
    <Wire d={Array.from({ length: 21 }, (_, i) => `M${polar(322, i * 9)}L${polar(401, i * 9)}`).join("")} />
    <path d={ngon(320, 40)} fill="#63a587" stroke={G} />
    <Wire d={ngon(324, 40)} />
    <path d={ngon(298)} fill="#a7a4a4" stroke={G} />
    <Wire c={G} d={ngon(290) + ngon(308) + ngon(314) + ngon(208) + ngon(103)} />
    <Wire c={G} d={Array.from({ length: 20 }, (_, i) => `M794,488L${polar(318, i * 18)}`).join("")} />
    <Wire c="#0d2418" d={Array.from({ length: 7 }, (_, i) => (i ? "L" : "M") + polar(316, 36 + i * 18)).join("")} />
    <circle cx="794" cy="488" r="14" fill="#45f09b" />
    <Wire d="M794,66V170" />
  </g>
);

/* ---------- page ---------- */

const Gradients = () => (
  <defs>
    <Ramp id="hull" stops={[[0, "#b0b0b0"], [0.1, "#848484"], [0.24, "#a8a8a8"], [0.3, "#8e8e8e"], [0.5, "#aaa"], [0.7, "#a4a4a4"], [0.8, "#6c6c6c"], [0.86, "#9c9c9c"], [0.94, "#707070"], [1, "#333"]]} />
    <Ramp id="panel" stops={[[0, "#959595"], [0.5, "#a8a6a6"], [1, "#8c8c8c"]]} />
    <Ramp id="tube" stops={[[0, "#4f8069"], [0.15, "#8c9390"], [0.4, "#a9a6a6"], [0.7, "#989696"], [0.88, "#5d5d5d"], [1, "#0c0c0c"]]} />
    <Ramp id="ringLight" stops={[[0, "#417a60"], [0.4, "#8c8f8d"], [1, "#a5a2a2"]]} />
    <Ramp id="ringDark" stops={[[0, "#0b1a12"], [0.4, "#5c6460"], [1, "#a5a2a2"]]} />
    <Ramp id="skin" stops={[[0, "#a4a4a4"], [1, "#9f9f9f"]]} />
    <Ramp id="persTube" x2={0.6} stops={[[0, "#6d7a74"], [0.35, "#a5a0a0"], [0.75, "#8f8b8b"], [1, "#303030"]]} />
    <Ramp id="persHull" x2={0.6} stops={[[0, "#a8a8a8"], [0.45, "#8e8e8e"], [0.7, "#a2a2a2"], [1, "#757575"]]} />
    <Ramp id="engine" stops={[[0, "#7c8a82"], [0.6, "#8b928e"], [1, "#5f8272"]]} />
    <Ramp id="sideTube" stops={[[0, "#547a68"], [0.2, "#999"], [0.5, "#aaa7a7"], [0.75, "#8f8f8f"], [0.92, "#5a6660"], [1, "#000"]]} />
    <Ramp id="sideHull" stops={[[0, "#a0a0a0"], [0.1, "#828282"], [0.25, "#a8a8a8"], [0.6, "#a6a6a6"], [0.8, "#888"], [0.92, "#666"], [1, "#222"]]} />
    <Ramp id="sideEngine" stops={[[0, "#6f7c76"], [0.4, "#a3a0a0"], [0.85, "#8f9391"], [1, "#3d4742"]]} />
    <Ramp id="underArm" stops={[[0, "#646464"], [1, "#858585"]]} />
    <Ramp id="wing" stops={[[0, "#7f7f7f"], [1, "#a3a3a3"]]} />
    <Ramp id="ring" stops={[[0, "#a2a2a2"], [0.7, "#909090"], [1, "#a8a8a8"]]} />
  </defs>
);

function Viewport({ box, name, nameLeft, isActive, children }) {
  return (
    <Stage $active={isActive}>
      <Scene viewBox={box} preserveAspectRatio="xMidYMid slice" aria-hidden="true">{children}</Scene>
      {name && <CameraName $left={nameLeft}>{name}</CameraName>}
    </Stage>
  );
}

export default function App() {
  return (
    <>
      <GlobalStyle />
      <Workspace>
        <PaneRow $share={962}>
          <Pane $share={1851} aria-label="Top view">
            <Viewport box="0 0 1851 962" name="top -Y" nameLeft="calc(50% - 43px)">
              <Gradients />
              <OrthoGrid x0={997} y0={385} step={282.3} left={0} right={1851} top={0} bottom={962} />
              <TopModel />
            </Viewport>
          </Pane>
          <Splitter $vertical><Grip $vertical /></Splitter>
          <Pane $share={1863} aria-label="Perspective view">
            <Viewport box="1858 0 1862 961" name="persp" nameLeft="calc(50% - 6px)" isActive>
              <PerspectiveGrid />
              <PerspModel />
              <path d="M1883.500,924V937" stroke="#4fd04f" />
              <path d="M1883.500,936.500L1894,932" stroke="#1a1a9c" />
              <path d="M1883.500,936.500L1873,928" stroke="#b03030" />
              <AxisText x="1880" y="922" fill="#45c945">y</AxisText>
              <AxisText x="1893" y="930" fill="#1a1aa6">z</AxisText>
              <AxisText x="1870" y="930" fill="#b32d2d">x</AxisText>
            </Viewport>
          </Pane>
        </PaneRow>
        <Splitter><Grip /></Splitter>
        <PaneRow $share={1014}>
          <Pane $share={1851} aria-label="Side view">
            <PanelHeader cropped />
            <Viewport box="0 1006 1851 974">
              <OrthoGrid x0={953} y0={1609} step={254} left={0} right={1851} top={1006} bottom={1980} />
              <SideModel />
            </Viewport>
          </Pane>
          <Splitter $vertical />
          <Pane $share={1863} aria-label="Front view">
            <PanelHeader />
            <Viewport box="1857 1006 1863 974">
              <OrthoGrid x0={2926} y0={1661} step={420} left={1857} right={3720} top={1006} bottom={1980} />
              <FrontModel />
              <path d="M1883.500,1957V1970" stroke="#a8c850" />
              <path d="M1869,1970.500H1884" stroke="#1a1a9c" />
              <AxisText x="1880" y="1953" fill="#45c945">y</AxisText>
              <AxisText x="1865" y="1969" fill="#1a1aa6">z</AxisText>
              <AxisText x="1880" y="1969" fill="#a8642d">x</AxisText>
            </Viewport>
          </Pane>
        </PaneRow>
      </Workspace>
    </>
  );
}
